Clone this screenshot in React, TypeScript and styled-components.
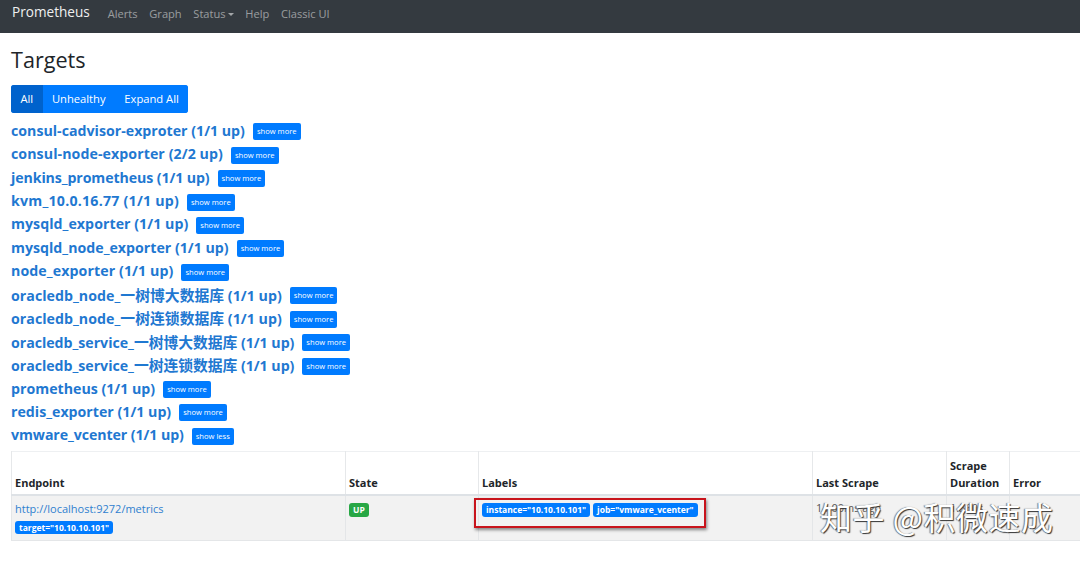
import React from "react";
import styled, { createGlobalStyle } from "styled-components";

const Global = createGlobalStyle`
  html, body { margin: 0; padding: 0; background: #fff; }
  body { font-family: "Open Sans", "Noto Sans CJK SC", sans-serif; color: #212529; overflow: hidden; width: 1080px; height: 562px; position: relative; }
`;

const Nav = styled.nav`
  height: 33px;
  background: #343a40;
  display: flex;
  align-items: flex-start;
  padding: 3px 0 0 12px;
  box-sizing: border-box;
`;
const Brand = styled.span`
  font-size: 13.6px;
  line-height: 20px;
  color: #fff;
  opacity: 0.92;
  margin: -1px 18px 0 0;
`;
const NavLink = styled.span`
  font-size: 11.1px;
  line-height: 22px;
  color: rgba(255, 255, 255, 0.5);
  margin-right: 11.7px;
  display: inline-flex;
  align-items: center;
`;
const Caret = styled.i`
  width: 0;
  height: 0;
  border-top: 3px solid rgba(255, 255, 255, 0.55);
  border-left: 3px solid transparent;
  border-right: 3px solid transparent;
  margin-left: 2px;
`;
const Main = styled.main`
  padding: 0 0 0 11px;
`;
const Title = styled.h1`
  font-size: 21.6px;
  font-weight: 400;
  line-height: 32px;
  margin: 11px 0 9px;
`;
const Group = styled.div`
  display: inline-flex;
  height: 28px;
  border-radius: 3px;
  overflow: hidden;
  background: #007bff;
  margin-bottom: 6px;
  vertical-align: top;
`;
const GroupBtn = styled.span<{ $active?: boolean }>`
  font-size: 11.2px;
  line-height: 28px;
  color: #fff;
  padding: 0 9.4px;
  background: ${(p) => (p.$active ? "#0062cc" : "#007bff")};
`;
const Rows = styled.div`
  display: flex;
  flex-direction: column;
`;
const Row = styled.div`
  height: 23.45px;
  display: flex;
  align-items: center;
`;
const JobName = styled.a<{ $track: number }>`
  font-size: 14.2px;
  font-weight: 700;
  color: #1f78d1;
  white-space: nowrap;
  margin-top: -1px;
  letter-spacing: ${(p) => p.$track}px;
`;
const Cjk = styled.span`
  font-size: 14.8px;
`;
const SmallBtn = styled.span`
  margin-left: 8px;
  background: #007bff;
  color: #fff;
  font-size: 7.6px;
  line-height: 17px;
  height: 17px;
  padding: 0 4px;
  border-radius: 2px;
  white-space: nowrap;
  position: relative;
  top: 1px;
`;
const Table = styled.table`
  border-collapse: collapse;
  table-layout: fixed;
  width: 1100px;
  margin-top: 4.3px;
  font-size: 11px;
  border-top: 1px solid #eef0f2;
`;
const Th = styled.th`
  border: 1px solid #e6e8ea;
  border-top: none;
  border-bottom: 2px solid #dee2e6;
  text-align: left;
  vertical-align: bottom;
  font-weight: 700;
  font-size: 11px;
  line-height: 17px;
  padding: 4px 4px 3px 3px;
  height: 35px;
`;
const Td = styled.td`
  background: #f2f2f2;
  border: 1px solid #e4e6e8;
  vertical-align: top;
  padding: 3px 4px 3px 3px;
  height: 37px;
  line-height: 16px;
  position: relative;
`;
const EndpointLink = styled.a`
  display: block;
  color: #2f80cf;
  font-size: 11px;
  line-height: 20px;
  margin-bottom: 1.5px;
`;
const Badge = styled.span<{ $color?: string }>`
  display: inline-block;
  background: ${(p) => p.$color ?? "#007bff"};
  color: #fff;
  font-size: 8.5px;
  font-weight: 700;
  line-height: 13.5px;
  padding: 0 4px;
  border-radius: 3px;
  white-space: nowrap;
  vertical-align: top;
`;
const LabelRow = styled.div`
  display: flex;
  gap: 3px;
  margin-top: 4px;
`;
const RedBox = styled.div`
  position: absolute;
  left: -5px;
  top: 2px;
  width: 228px;
  height: 26px;
  border: 2px solid #c8141c;
  box-shadow: 1px 2px 3px rgba(0, 0, 0, 0.45);
`;
const Watermark = styled.div`
  position: absolute;
  left: 820px;
  top: 496px;
  font-size: 32px;
  line-height: 40px;
  letter-spacing: 0.5px;
  color: #fff;
  white-space: nowrap;
  font-family: "Noto Sans CJK SC", sans-serif;
  text-shadow: 1px 1px 1px #333, -1px 0 1px #777;
`;
const Faint = styled.span`
  display: block;
  margin-top: 1px;
  color: #555;
  font-size: 11px;
`;

type Job = { name: string; cjk?: string; rest?: string; action: string; track?: number };

const jobs: Job[] = [
  { name: "consul-cadvisor-exproter (1/1 up)", action: "show more" },
  { name: "consul-node-exporter (2/2 up)", action: "show more", track: 0.07 },
  { name: "jenkins_prometheus (1/1 up)", action: "show more", track: -0.11 },
  { name: "kvm_10.0.16.77 (1/1 up)", action: "show more", track: 0.22 },
  { name: "mysqld_exporter (1/1 up)", action: "show more", track: 0.04 },
  { name: "mysqld_node_exporter (1/1 up)", action: "show more" },
  { name: "node_exporter (1/1 up)", action: "show more", track: 0.09 },
  { name: "oracledb_node_", cjk: "一树博大数据库", rest: " (1/1 up)", action: "show more", track: 0.03 },
  { name: "oracledb_node_", cjk: "一树连锁数据库", rest: " (1/1 up)", action: "show more", track: 0.03 },
  { name: "oracledb_service_", cjk: "一树博大数据库", rest: " (1/1 up)", action: "show more", track: -0.03 },
  { name: "oracledb_service_", cjk: "一树连锁数据库", rest: " (1/1 up)", action: "show more", track: -0.03 },
  { name: "prometheus (1/1 up)", action: "show more" },
  { name: "redis_exporter (1/1 up)", action: "show more" },
  { name: "vmware_vcenter (1/1 up)", action: "show less", track: -0.09 },
];

export default function App() {
  return (
    <>
      <Global />
      <Nav>
        <Brand>Prometheus</Brand>
        <NavLink>Alerts</NavLink>
        <NavLink>Graph</NavLink>
        <NavLink>Status<Caret /></NavLink>
        <NavLink>Help</NavLink>
        <NavLink>Classic UI</NavLink>
      </Nav>
      <Main>
        <Title>Targets</Title>
        <Group>
          <GroupBtn $active>All</GroupBtn>
          <GroupBtn>Unhealthy</GroupBtn>
          <GroupBtn>Expand All</GroupBtn>
        </Group>
        <Rows>
          {jobs.map((job) => (
            <Row key={job.name + (job.cjk ?? "")}>
              <JobName $track={job.track ?? 0}>
                {job.name}
                {job.cjk && <Cjk>{job.cjk}</Cjk>}
                {job.rest}
              </JobName>
              <SmallBtn>{job.action}</SmallBtn>
            </Row>
          ))}
        </Rows>
        <Table>
          <colgroup>
            <col style={{ width: 334 }} />
            <col style={{ width: 133 }} />
            <col style={{ width: 334 }} />
            <col style={{ width: 134 }} />
            <col style={{ width: 63 }} />
            <col />
          </colgroup>
          <thead>
            <tr>
              <Th>Endpoint</Th>
              <Th>State</Th>
              <Th>Labels</Th>
              <Th>Last Scrape</Th>
              <Th>Scrape Duration</Th>
              <Th>Error</Th>
            </tr>
          </thead>
          <tbody>
            <tr>
              <Td>
                <EndpointLink>http://localhost:9272/metrics</EndpointLink>
                <Badge>target="10.10.10.101"</Badge>
              </Td>
              <Td>
                <LabelRow><Badge $color="#28a745">UP</Badge></LabelRow>
              </Td>
              <Td>
                <LabelRow>
                  <Badge>instance="10.10.10.101"</Badge>
                  <Badge>job="vmware_vcenter"</Badge>
                </LabelRow>
                <RedBox />
              </Td>
              <Td><Faint>14.00ms ago</Faint></Td>
              <Td><Faint>1.560s</Faint></Td>
              <Td />
            </tr>
          </tbody>
        </Table>
      </Main>
      <Watermark>知乎 @积微速成</Watermark>
    </>
  );
}
